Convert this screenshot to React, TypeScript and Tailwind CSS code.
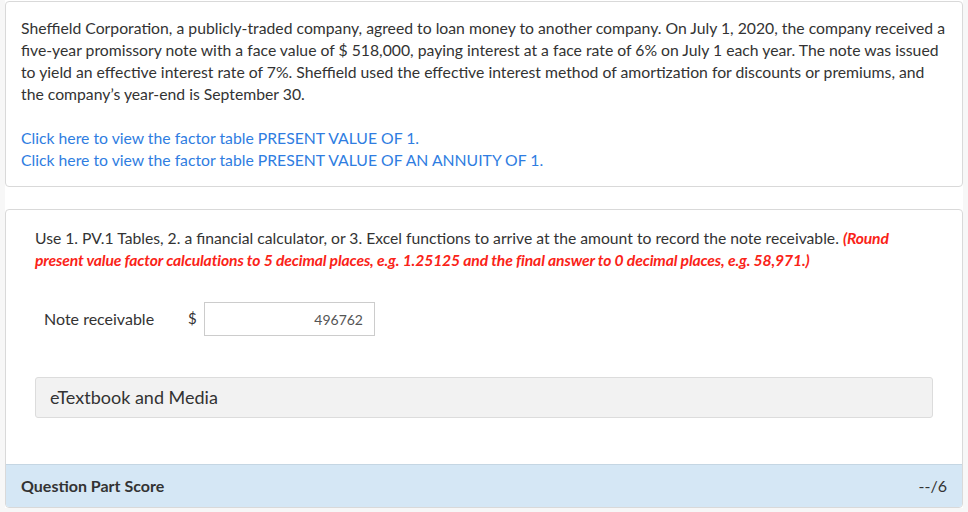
import React from 'react';

export default function App() {
  return (
    <div className="min-h-[512px] w-[968px] bg-[#f7f7f7] font-['Lato','Liberation_Sans',sans-serif] text-[#333]">
      <div className="mx-[5px] bg-white pt-px">
        {/* Question stem */}
        <div className="rounded-[4px] border border-[#d9d9d9] bg-white px-[15px] py-[15px] text-[15.75px] leading-[22px]">
          <p className="whitespace-nowrap">
            Sheffield Corporation, a publicly-traded company, agreed to loan money to another company. On July 1, 2020, the company received a
            <br />
            five-year promissory note with a face value of $ 518,000, paying interest at a face rate of 6% on July 1 each year. The note was issued
            <br />
            to yield an effective interest rate of 7%. Sheffield used the effective interest method of amortization for discounts or premiums, and
            <br />
            the company’s year-end is September 30.
          </p>
          <p className="mt-[22px] text-[#2f7de1]">
            <a className="block">Click here to view the factor table PRESENT VALUE OF 1.</a>
            <a className="block">Click here to view the factor table PRESENT VALUE OF AN ANNUITY OF 1.</a>
          </p>
        </div>

        <div className="h-[22px]" />

        {/* Question part */}
        <div className="overflow-hidden rounded-[4px] border border-[#d9d9d9] bg-white">
          <div className="px-[29px] pt-[17px] pb-[46px]">
            <p className="text-[15.7px] leading-[22px]">
              Use 1. PV.1 Tables, 2. a financial calculator, or 3. Excel functions to arrive at the amount to record the note receivable.{' '}
              <span className="font-bold italic tracking-[-0.14px] text-[#fa2318]">
                (Round present value factor calculations to 5 decimal places, e.g. 1.25125 and the final answer to 0 decimal places, e.g. 58,971.)
              </span>
            </p>

            <div className="mt-[31px] flex items-center">
              <span className="ml-[9px] w-[144px] text-[16px]">Note receivable</span>
              <span className="-mt-[2px] w-[16px] text-[15px]">$</span>
              <div className="flex h-[34px] w-[171px] items-center justify-end border border-[#cccccc] bg-white pr-[11px] text-[14px] text-[#555]">
                496762
              </div>
            </div>

            <div className="mt-[41px] flex h-[41px] items-center rounded-[3px] border border-[#dcdcdc] bg-[#f2f2f2] px-[14px] text-[18px]">
              eTextbook and Media
            </div>
          </div>

          <div className="flex h-[43px] items-center justify-between border-t border-[#c5d6e3] bg-[#d5e7f5] px-[15px] text-[16px]">
            <span className="font-bold">Question Part Score</span>
            <span>--/6</span>
          </div>
        </div>
      </div>
    </div>
  );
}
